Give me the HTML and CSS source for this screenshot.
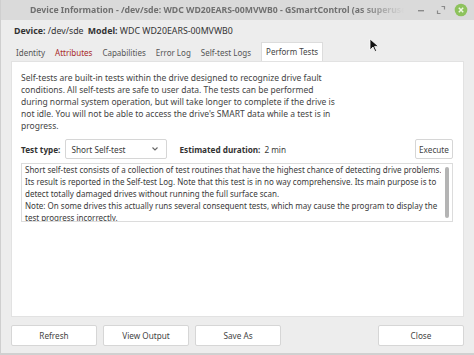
FILE: index.html
```html
<!DOCTYPE html>
<html>
<head>
<meta charset="utf-8">
<link rel="stylesheet" href="styles.css">
</head>
<body>
<div class="window">
  <div class="titlebar">
    <div class="title">Device Information - /dev/sde: WDC WD20EARS-00MVWB0 - GSmartControl (as superuser)</div>
    <div class="controls">
      <svg class="ctl" width="14" height="14" viewBox="0 0 14 14"><rect x="4" y="7" width="6" height="1.4" fill="#8a8a8a"/></svg>
      <svg class="ctl" width="14" height="14" viewBox="0 0 14 14"><path d="M7.5 3.5h3v3M6.5 10.5h-3v-3" fill="none" stroke="#8a8a8a" stroke-width="1.2"/></svg>
      <svg class="ctl" width="14" height="14" viewBox="0 0 14 14"><circle cx="7" cy="7" r="6.3" fill="#8dc25c"/><path d="M4.8 4.8l4.4 4.4M9.2 4.8l-4.4 4.4" stroke="#eef7e4" stroke-width="1.5"/></svg>
    </div>
  </div>
  <div class="body">
    <div class="devline"><b>Device:</b> /dev/sde <b class="model">Model:</b> WDC WD20EARS-00MVWB0</div>
    <div class="tabs">
      <span class="tab">Identity</span>
      <span class="tab warn">Attributes</span>
      <span class="tab">Capabilities</span>
      <span class="tab">Error Log</span>
      <span class="tab">Self-test Logs</span>
      <span class="tab active">Perform Tests</span>
    </div>
    <div class="panel">
      <p class="desc">Self-tests are built-in tests within the drive designed to recognize drive fault<br>conditions. All self-tests are safe to user data. The tests can be performed<br>during normal system operation, but will take longer to complete if the drive is<br>not idle. You will not be able to access the drive's SMART data while a test is in<br>progress.</p>
      <div class="testrow">
        <b class="lbl">Test type:</b>
        <div class="combo"><span>Short Self-test</span><svg width="8" height="6" viewBox="0 0 8 6"><path d="M1.5 1.5l2.5 2.5 2.5-2.5" fill="none" stroke="#666" stroke-width="1.1"/></svg></div>
        <b class="lbl est">Estimated duration:</b><span class="dur">2 min</span>
        <button class="btn exec">Execute</button>
      </div>
      <div class="textbox">
        <div class="tbtext">Short self-test consists of a collection of test routines that have the highest chance of detecting drive problems.<br>Its result is reported in the Self-test Log. Note that this test is in no way comprehensive. Its main purpose is to<br>detect totally damaged drives without running the full surface scan.<br>Note: On some drives this actually runs several consequent tests, which may cause the program to display the<br>test progress incorrectly.</div>
        <div class="scroll"></div>
      </div>
    </div>
    <div class="buttons">
      <button class="btn big">Refresh</button>
      <button class="btn big">View Output</button>
      <button class="btn big">Save As</button>
      <span class="spacer"></span>
      <button class="btn big">Close</button>
    </div>
  </div>
  <svg class="cursor" width="10" height="15" viewBox="0 0 10 15"><path d="M1 1v11l3-3 2 4.5 1.6-.7-2-4.4H9.5z" fill="#111" stroke="#fff" stroke-width="0.8"/></svg>
</div>
</body>
</html>
```
FILE: styles.css
```css
html, body { margin: 0; padding: 0; }
body {
  width: 474px; height: 355px; overflow: hidden;
  font-family: "Noto Sans", "Open Sans", sans-serif;
  font-size: 8.2px; color: #3a3a3a;
  background: #d0d0d0;
}
.window {
  position: relative;
  width: 474px; height: 353px;
  background: #ededed;
  border-left: 1px solid #cfcfcf;
  box-sizing: border-box;
  display: flex; flex-direction: column;
}
.titlebar {
  height: 20px; flex: none;
  background: #dadada;
  display: flex; align-items: center;
  padding-left: 29px; padding-right: 6px;
}
.title {
  flex: 1; overflow: hidden; white-space: nowrap;
  font-weight: bold; font-size: 8.7px; color: #707070;
  -webkit-mask-image: linear-gradient(to right, #000 88%, transparent 100%);
  mask-image: linear-gradient(to right, #000 88%, transparent 100%);
}
.controls { display: flex; gap: 6px; margin-left: 10px; align-items: center; }
.body {
  flex: 1; display: flex; flex-direction: column;
  padding: 0 10px 0 10px;
}
.devline { height: 23px; line-height: 23px; padding-left: 3px; color: #333; font-size: 8.8px; }
.devline b { color: #333; }
.devline .model { margin-left: 2px; }
.tabs { display: flex; align-items: flex-end; height: 18px; padding-left: 0; font-size: 8px; }
.tab { padding: 0 5px; line-height: 17px; color: #555; }
.tab.warn { color: #a82a2a; }
.tab.active {
  background: #fff; border: 1px solid #dcdcdc; border-bottom: none;
  margin-left: 5px; padding: 0 4px; height: 18px; line-height: 17px; color: #444;
}
.panel {
  background: #fff; height: 256px; flex: none;
  border: 1px solid #e2e2e2; box-sizing: border-box;
  padding: 10px 10px 0 9px;
}
.desc { margin: 0; line-height: 12px; color: #444; font-size: 8.5px; }
.testrow { display: flex; align-items: center; margin-top: 7px; height: 20px; }
.lbl { color: #333; }
.combo {
  margin-left: 5px; width: 102px; height: 20px; box-sizing: border-box;
  border: 1px solid #d6d6d6; border-radius: 2px; background: #fff;
  display: flex; align-items: center; justify-content: space-between; padding: 0 7px 0 5px;
}
.est { margin-left: 12px; }
.dur { margin-left: 4px; }
.btn {
  font: inherit; color: #444; background: #fff;
  border: 1px solid #d6d6d6; border-radius: 2px; padding: 0;
}
.exec { margin-left: auto; width: 38px; height: 20px; }
.textbox {
  margin-top: 4px; height: 59px; border: 1px solid #dcdcdc; box-sizing: border-box;
  display: flex; overflow: hidden;
}
.tbtext { flex: 1; padding: 0 0 0 3px; font-size: 8px; line-height: 12px; color: #3a3a3a; white-space: nowrap; overflow: hidden; }
.scroll { width: 4px; height: 51px; margin: 3px 3px 0 4px; background: #b4b4b4; border-radius: 2px; flex: none; }
.buttons { display: flex; gap: 6px; margin-top: 8px; }
.spacer { flex: 1; }
.big { width: 86px; height: 21px; }
.cursor { position: absolute; left: 368px; top: 38px; }
```
